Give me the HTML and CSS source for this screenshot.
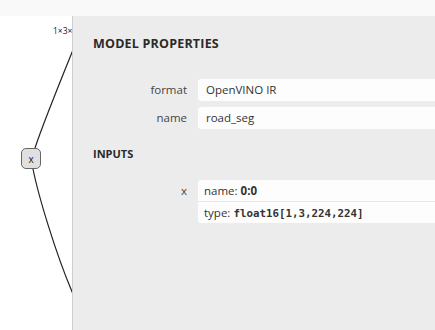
FILE: index.html
```html
<!DOCTYPE html>
<html>
<head>
<meta charset="utf-8">
<link rel="stylesheet" href="styles.css">
</head>
<body>
<div class="topbar"></div>
<div class="main">
  <div class="canvas">
    <svg class="graph" width="72" height="314" viewBox="0 0 72 314">
      <path class="edge" d="M35,132 C41,114 60,66 73,34"/>
      <path class="edge" d="M33,153 C38,178 55,236 73,278"/>
      <text class="edge-label" x="53" y="18">1×3×</text>
      <rect class="node" x="21.5" y="132.5" width="19" height="20" rx="4.5"/>
      <text class="node-label" x="31" y="146.5">x</text>
    </svg>
  </div>
  <div class="sidebar">
    <div class="title">MODEL PROPERTIES</div>
    <div class="props">
      <div class="label">format</div>
      <div class="value">OpenVINO IR</div>
      <div class="label">name</div>
      <div class="value">road_seg</div>
    </div>
    <div class="section">INPUTS</div>
    <div class="props">
      <div class="label">x</div>
      <div class="value multi">
        <div class="row">name: <b>0:0</b></div>
        <div class="row">type: <code>float16[1,3,224,224]</code></div>
      </div>
    </div>
  </div>
</div>
</body>
</html>
```
FILE: styles.css
```css
html, body {
  margin: 0;
  padding: 0;
  width: 435px;
  height: 330px;
  overflow: hidden;
  font-family: "Open Sans", "DejaVu Sans", sans-serif;
  background: #ffffff;
}
.topbar {
  height: 16px;
  background: #f9f9f9;
}
.main {
  display: flex;
  height: 314px;
}
.canvas {
  width: 72px;
  flex: none;
  overflow: hidden;
  background: #ffffff;
}
.graph {
  display: block;
  overflow: hidden;
}
.edge {
  fill: none;
  stroke: #222;
  stroke-width: 1.2;
}
.edge-label {
  font-family: "Open Sans", sans-serif;
  font-size: 8.5px;
  fill: #222;
}
.node {
  fill: #e0e0e0;
  stroke: #666;
  stroke-width: 1;
}
.node-label {
  font-family: "Open Sans", sans-serif;
  font-size: 10px;
  fill: #222;
  text-anchor: middle;
}
.sidebar {
  flex: 1;
  background: #ececec;
  border-left: 1px solid #cfcfcf;
  padding: 20px 0 0 20px;
  color: #333;
  font-size: 11.5px;
}
.title {
  font-weight: 700;
  font-size: 12.5px;
  letter-spacing: 0.2px;
  color: #2a2a2a;
  line-height: 16px;
  margin-bottom: 27px;
}
.section {
  font-weight: 700;
  font-size: 11px;
  color: #2a2a2a;
  line-height: 16px;
  margin: 17px 0 18px 0;
}
.props {
  display: grid;
  grid-template-columns: 94px 1fr;
  column-gap: 11px;
  row-gap: 6px;
}
.label {
  text-align: right;
  line-height: 22px;
  color: #444;
}
.value {
  background: #fdfdfd;
  border-radius: 3px 0 0 3px;
  height: 22px;
  line-height: 22px;
  padding-left: 8px;
  color: #333;
}
.value.multi {
  height: auto;
  padding-left: 0;
}
.row {
  padding-left: 6px;
  height: 21px;
  line-height: 21px;
}
.row + .row {
  border-top: 1px solid #e8e8e8;
}
.row b {
  font-weight: 700;
}
code {
  font-family: "DejaVu Sans Mono", monospace;
  font-weight: 700;
  font-size: 10.8px;
}
```
